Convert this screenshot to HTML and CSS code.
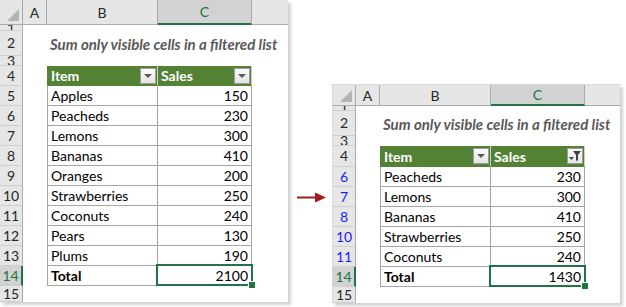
FILE: index.html
```html
<!DOCTYPE html>
<html lang="en">
<head>
    <meta charset="UTF-8">
    <meta name="viewport" content="width=device-width, initial-scale=1.0">
    <title>Sum visible cells</title>
    <link rel="stylesheet" href="styles.css">
</head>
<body>
    <div class="sheet left">
        <div class="corner"><span class="tri"></span></div>
        <div class="ch">A</div>
        <div class="ch">B</div>
        <div class="ch on">C</div>
        <div class="ch"></div>

        <div class="rh">1</div>
        <div class="rh">2</div>
        <div class="title">Sum only visible cells in a filtered list</div>
        <div class="rh">3</div>

        <div class="rh">4</div>
        <div class="b tb hd">Item<span class="dd"><i class="arr"></i></span></div>
        <div class="cc tb hd">Sales<span class="dd"><i class="arr"></i></span></div>

        <div class="rh">5</div><div class="b tb">Apples</div><div class="cc tb num">150</div>
        <div class="rh">6</div><div class="b tb">Peacheds</div><div class="cc tb num">230</div>
        <div class="rh">7</div><div class="b tb">Lemons</div><div class="cc tb num">300</div>
        <div class="rh">8</div><div class="b tb">Bananas</div><div class="cc tb num">410</div>
        <div class="rh">9</div><div class="b tb">Oranges</div><div class="cc tb num">200</div>
        <div class="rh">10</div><div class="b tb">Strawberries</div><div class="cc tb num">250</div>
        <div class="rh">11</div><div class="b tb">Coconuts</div><div class="cc tb num">240</div>
        <div class="rh">12</div><div class="b tb">Pears</div><div class="cc tb num">130</div>
        <div class="rh">13</div><div class="b tb">Plums</div><div class="cc tb num">190</div>
        <div class="rh on">14</div><div class="b tb bold">Total</div><div class="cc tb num sel">2100</div>
        <div class="rh">15</div>
    </div>

    <div class="gap">
        <svg class="arrow" width="30" height="11" viewBox="0 0 30 11">
            <rect x="0" y="4.5" width="20" height="2" fill="#a31c1c"/>
            <polygon points="18,0.5 29,5.5 18,10.5" fill="#a31c1c"/>
        </svg>
    </div>

    <div class="sheet right">
        <div class="corner"><span class="tri"></span></div>
        <div class="ch">A</div>
        <div class="ch">B</div>
        <div class="ch on">C</div>
        <div class="ch"></div>

        <div class="rh">1</div>
        <div class="rh">2</div>
        <div class="title">Sum only visible cells in a filtered list</div>
        <div class="rh">3</div>

        <div class="rh">4</div>
        <div class="b tb hd">Item<span class="dd"><i class="arr"></i></span></div>
        <div class="cc tb hd">Sales<span class="dd">
            <svg width="13" height="12" viewBox="0 0 13 12">
                <polygon points="4,1 12,1 9,5 9,10 7,11 7,5" fill="#3f3f3f"/>
                <polygon points="0,7 5,7 2.5,10" fill="#3f3f3f"/>
            </svg>
        </span></div>

        <div class="rh f">6</div><div class="b tb">Peacheds</div><div class="cc tb num">230</div>
        <div class="rh f">7</div><div class="b tb">Lemons</div><div class="cc tb num">300</div>
        <div class="rh f">8</div><div class="b tb">Bananas</div><div class="cc tb num">410</div>
        <div class="rh f">10</div><div class="b tb">Strawberries</div><div class="cc tb num">250</div>
        <div class="rh f">11</div><div class="b tb">Coconuts</div><div class="cc tb num">240</div>
        <div class="rh on">14</div><div class="b tb bold">Total</div><div class="cc tb num sel">1430</div>
        <div class="rh">15</div>
    </div>
</body>
</html>
```

FILE: styles.css
```css
*{
    margin: 0;
    padding: 0;
    box-sizing: border-box;
}
body{
    width: 626px;
    height: 307px;
    overflow: hidden;
    background: #fff;
    display: flex;
    align-items: flex-start;
    font-family: Lato, "Liberation Sans", sans-serif;
    font-size: 14px;
    color: #000;
}
.sheet{
    width: 288px;
    display: grid;
    grid-template-columns: 23px 24px 111px 94px 1fr;
    background: #fff;
    box-shadow: 3px 3px 3px rgba(0, 0, 0, 0.18);
}
.left{
    grid-template-rows: 25px 6px 25px 10px repeat(11, 20px) 16px;
}
.right{
    margin-top: 84px;
    grid-template-rows: 21px 5px 25px 10px 21px repeat(6, 20px) 16px;
    border-top: 1px solid #d8d8d8;
    border-left: 1px solid #d8d8d8;
}
.gap{
    width: 44px;
    padding: 192px 0 0 9px;
}
.arrow{
    display: block;
}

/* headers */
.corner, .ch{
    background: #e6e6e6;
    border-right: 1px solid #ababab;
    border-bottom: 1px solid #ababab;
}
.corner{
    display: flex;
    justify-content: flex-end;
    align-items: flex-end;
    padding: 0 3px 3px 0;
}
.tri{
    width: 12px;
    height: 12px;
    background: #b4b4b4;
    clip-path: polygon(100% 0, 100% 100%, 0 100%);
}
.ch{
    display: flex;
    align-items: center;
    justify-content: center;
    color: #262626;
}
.ch:nth-child(5){
    border-right: none;
}
.ch.on{
    background: #d2d2d2;
    color: #217346;
    border-bottom: 2px solid #217346;
}
.rh{
    grid-column: 1;
    background: #e6e6e6;
    border-right: 1px solid #ababab;
    border-bottom: 1px solid #cfcfcf;
    color: #262626;
    display: flex;
    align-items: center;
    justify-content: center;
    overflow: hidden;
    line-height: 14px;
}
.rh.f{
    color: #1c1cff;
}
.rh.on{
    background: #d2d2d2;
    color: #217346;
    border-right: 2px solid #217346;
}

/* cells */
.title{
    grid-column: 3 / 6;
    display: flex;
    align-items: flex-end;
    padding: 0 0 3px 3px;
    white-space: nowrap;
    font-size: 15px;
    font-weight: bold;
    font-style: italic;
    color: #595959;
}
.b{
    grid-column: 3;
}
.cc{
    grid-column: 4;
}
.tb{
    display: flex;
    align-items: center;
    padding: 0 3px;
    white-space: nowrap;
    border-right: 1px solid #a6a6a6;
    border-bottom: 1px solid #a6a6a6;
}
.b.tb{
    border-left: 1px solid #a6a6a6;
}
.num{
    justify-content: flex-end;
}
.bold{
    font-weight: bold;
}
.hd{
    background: #548235;
    color: #fff;
    font-weight: bold;
    border-bottom-color: #548235;
    border-right-color: #c9d6bf;
    padding-right: 1px;
}
.b.hd{
    border-left-color: #548235;
}
.dd{
    margin-left: auto;
    width: 16px;
    height: 16px;
    background: linear-gradient(#fdfdfd, #e4e4e4);
    border: 1px solid #9c9c9c;
    display: flex;
    align-items: center;
    justify-content: center;
}
.arr{
    border-left: 4px solid transparent;
    border-right: 4px solid transparent;
    border-top: 4px solid #595959;
}
.sel{
    position: relative;
}
.sel::before{
    content: "";
    position: absolute;
    top: -2px;
    left: -2px;
    right: -2px;
    bottom: -1px;
    border: 2px solid #217346;
}
.sel::after{
    content: "";
    position: absolute;
    right: -4px;
    bottom: -3px;
    width: 6px;
    height: 6px;
    background: #217346;
    border-left: 1px solid #fff;
    border-top: 1px solid #fff;
}
```
